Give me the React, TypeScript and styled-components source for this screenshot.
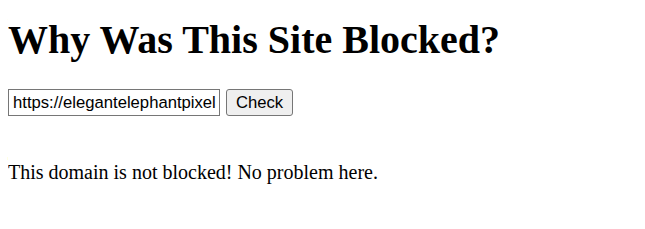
import React from 'react'
import styled, { createGlobalStyle } from 'styled-components'

const GlobalStyle = createGlobalStyle`
    body {
        margin: 8px;
        font-family: 'Liberation Serif', 'Times New Roman', serif;
        font-size: 20px;
        color: #000;
        background: #fff;
    }
`

const Title = styled.h1`
    font-size: 40px;
    line-height: 46px;
    font-weight: bold;
    margin: 8.5px 0 26.5px;
`

const CheckForm = styled.form`
    display: flex;
    align-items: center;
    gap: 6px;
`

const UrlInput = styled.input`
    box-sizing: border-box;
    width: 212px;
    height: 27px;
    font-family: 'Liberation Sans', Arial, sans-serif;
    font-size: 16.67px;
    padding: 1px 3px 1px 4px;
    border: 1px solid #767676;
    border-radius: 0;
    color: #000;
    background: #fff;
`

const CheckButton = styled.button`
    box-sizing: border-box;
    width: 67px;
    height: 27px;
    font-family: 'Liberation Sans', Arial, sans-serif;
    font-size: 16.67px;
    padding: 1px 7px;
    border: 1px solid #767676;
    border-radius: 3px;
    background: #efefef;
    color: #000;
`

const Result = styled.p`
    font-size: 20px;
    line-height: 23px;
    margin: 45px 0 20px;
`

export default function App() {
    return (
        <>
            <GlobalStyle />
            <Title>Why Was This Site Blocked?</Title>
            <CheckForm onSubmit={e => e.preventDefault()}>
                <UrlInput type='text' defaultValue='https://elegantelephantpixel.com' />
                <CheckButton type='submit'>Check</CheckButton>
            </CheckForm>
            <Result>This domain is not blocked! No problem here.</Result>
        </>
    )
}
